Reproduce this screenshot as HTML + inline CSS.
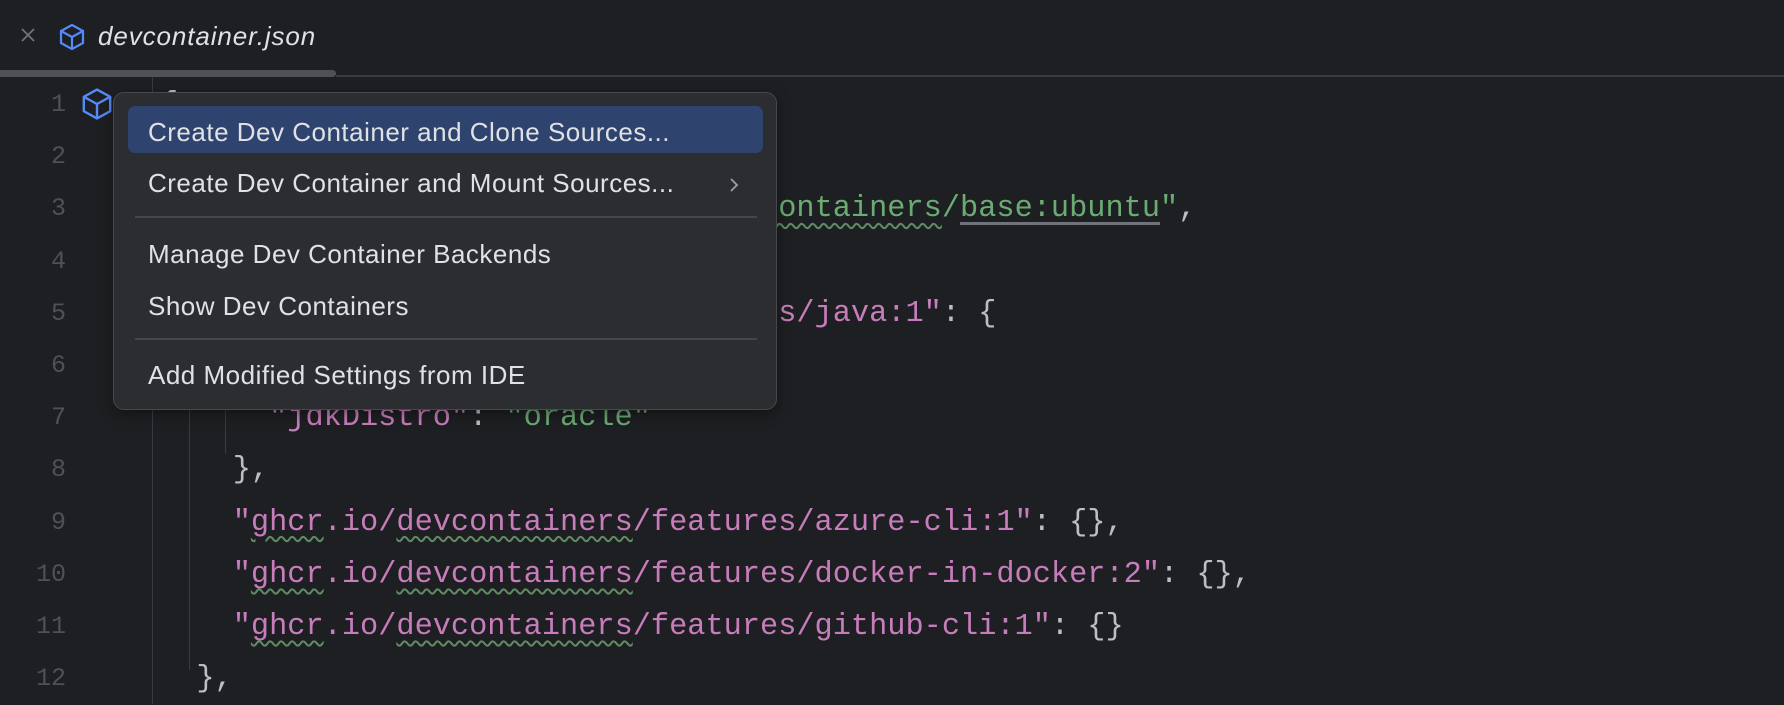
<!DOCTYPE html>
<html><head><meta charset="utf-8"><style>
*{margin:0;padding:0;box-sizing:border-box}
body{width:1784px;height:704px;background:#1e1f22;overflow:hidden;position:relative;font-family:"Liberation Sans",sans-serif}
.tab{position:absolute;left:98px;top:21px;font-size:26px;letter-spacing:0.9px;font-style:italic;color:#dfe1e5}
.thumb{position:absolute;left:0;top:70px;width:336px;height:7px;background:#4e5157;border-radius:0 4px 4px 0}
.hline{position:absolute;left:336px;right:0;top:75px;height:2px;background:#393b40}
.vg{position:absolute;width:1px;background:#393b40}
.ln{position:absolute;left:0;width:66px;text-align:right;font-family:"Liberation Mono",monospace;font-size:25px;color:#4e5157;line-height:52.2px}
.code{position:absolute;left:160px;top:79px;font-family:"Liberation Mono",monospace;font-size:30.3px;line-height:52.2px;color:#bcbec4;white-space:pre}
.k{color:#c77dbb}.s{color:#6aab73}
.w{text-decoration:underline wavy #5f8c63;text-decoration-thickness:1.5px;text-underline-offset:6px}
.u{text-decoration:underline solid #6f737a;text-underline-offset:6px}
.menu{position:absolute;left:113px;top:92px;width:664px;height:318px;background:#2b2d30;border:1px solid #46484d;border-radius:11px;box-shadow:0 4px 14px rgba(0,0,0,.4)}
.it{position:absolute;left:34px;font-size:26px;letter-spacing:0.5px;color:#dfe1e5;line-height:30px}
.sel{position:absolute;left:14px;top:13px;width:635px;height:47px;background:#2e436e;border-radius:7px}
.sep{position:absolute;left:21px;width:622px;height:2px;background:#43454a}
</style></head><body>
<svg style="position:absolute;left:20px;top:27px" width="16" height="16" viewBox="0 0 16 16"><path d="M2 2L14 14M14 2L2 14" stroke="#6f737a" stroke-width="1.8"/></svg>
<svg style="position:absolute;left:57px;top:22px" width="30" height="30" viewBox="0 0 30 30" fill="none" stroke="#548af7" stroke-width="2.2" stroke-linejoin="round"><path d="M15 3L26 9V21L15 27L4 21V9Z M4 9L15 15L26 9 M15 15V27"/></svg>
<div class="tab">devcontainer.json</div>
<div class="thumb"></div><div class="hline"></div>
<div class="vg" style="left:152px;top:77px;height:627px"></div>
<div class="vg" style="left:189px;top:340px;height:330px"></div>
<div class="vg" style="left:225px;top:340px;height:114px"></div>
<div class="ln" style="top:79px">1<br>2<br>3<br>4<br>5<br>6<br>7<br>8<br>9<br>10<br>11<br>12</div>
<svg style="position:absolute;left:79px;top:86px" width="36" height="36" viewBox="0 0 30 30" fill="none" stroke="#548af7" stroke-width="2" stroke-linejoin="round"><path d="M15 3L26 9V21L15 27L4 21V9Z M4 9L15 15L26 9 M15 15V27"/></svg>
<div class="code">{
  <span class="k">"name"</span>: <span class="s">"Java"</span>,
  <span class="k">"image"</span>: <span class="s">"mcr.microsoft.com/<span class="w">devcontainers</span>/<span class="u">base:ubuntu</span>"</span>,
  <span class="k">"features"</span>: {
    <span class="k">"<span class="w">ghcr</span>.io/<span class="w">devcontainers</span>/features/java:1"</span>: {
      <span class="k">"version"</span>: <span class="s">"17"</span>,
      <span class="k">"jdkDistro"</span>: <span class="s">"oracle"</span>
    },
    <span class="k">"<span class="w">ghcr</span>.io/<span class="w">devcontainers</span>/features/azure-cli:1"</span>: {},
    <span class="k">"<span class="w">ghcr</span>.io/<span class="w">devcontainers</span>/features/docker-in-docker:2"</span>: {},
    <span class="k">"<span class="w">ghcr</span>.io/<span class="w">devcontainers</span>/features/github-cli:1"</span>: {}
  },</div>
<div class="menu">
<div class="sel"></div>
<div class="it" style="top:24px">Create Dev Container and Clone Sources...</div>
<div class="it" style="top:75px">Create Dev Container and Mount Sources...</div>
<svg style="position:absolute;left:614px;top:84px" width="12" height="16" viewBox="0 0 12 16"><path d="M3 2L9 8L3 14" stroke="#9da0a8" stroke-width="1.8" fill="none"/></svg>
<div class="sep" style="top:123px"></div>
<div class="it" style="top:146px">Manage Dev Container Backends</div>
<div class="it" style="top:198px">Show Dev Containers</div>
<div class="sep" style="top:245px"></div>
<div class="it" style="top:267px">Add Modified Settings from IDE</div>
</div>
</body></html>
